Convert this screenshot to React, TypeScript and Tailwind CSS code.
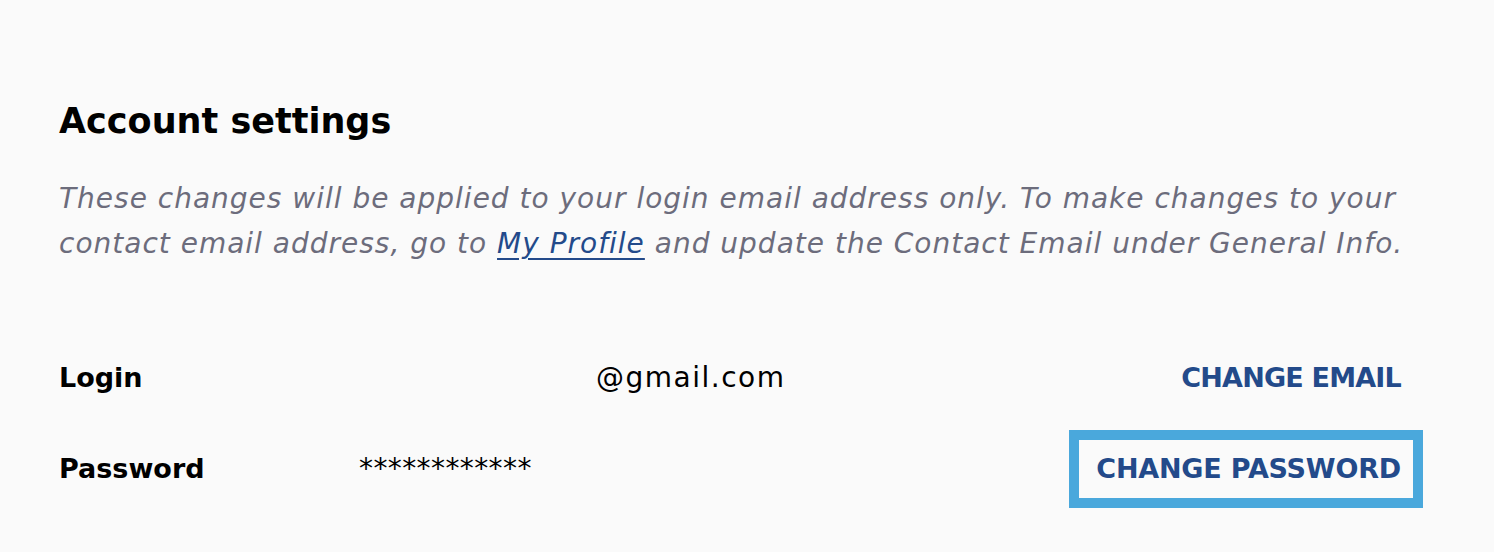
import React from "react";

export default function App() {
  return (
    <div
      className="min-h-[552px] w-full bg-[#fafafa] pl-[59px] pr-[71px] pt-[94px]"
      style={{ fontFamily: '"DejaVu Sans", "Open Sans", sans-serif' }}
    >
      <h1 className="text-[35px] font-bold leading-[54px] text-black">Account settings</h1>
      <p className="mt-[28px] text-[28px] italic leading-[45px] tracking-[1px] text-[#6c6c7c]">
        These changes will be applied to your login email address only. To make changes to your contact email
        address, go to{" "}
        <a href="#" className="text-[#234a8a] underline underline-offset-[5px]">
          My Profile
        </a>{" "}
        and update the Contact Email under General Info.
      </p>
      <div className="mt-[73px] flex flex-col gap-[13px]">
        <div className="flex h-[78px] items-center">
          <div className="w-[300px] text-[27px] font-bold text-black">Login</div>
          <div className="flex-1 pl-[237px] text-[28px] tracking-[1.5px] text-black">@gmail.com</div>
          <button className="pr-[22px] text-[27px] font-bold uppercase tracking-[-0.8px] text-[#234a8a]">
            Change Email
          </button>
        </div>
        <div className="flex h-[78px] items-center">
          <div className="w-[300px] text-[27px] font-bold text-black">Password</div>
          <div className="flex-1 text-[28px] tracking-[0.4px] text-black">************</div>
          <button className="flex h-[78px] items-center border-[10px] border-[#4aa8dc] pl-[17px] pr-[12px] text-[27px] font-bold uppercase tracking-[-0.2px] text-[#234a8a]">
            Change Password
          </button>
        </div>
      </div>
    </div>
  );
}
